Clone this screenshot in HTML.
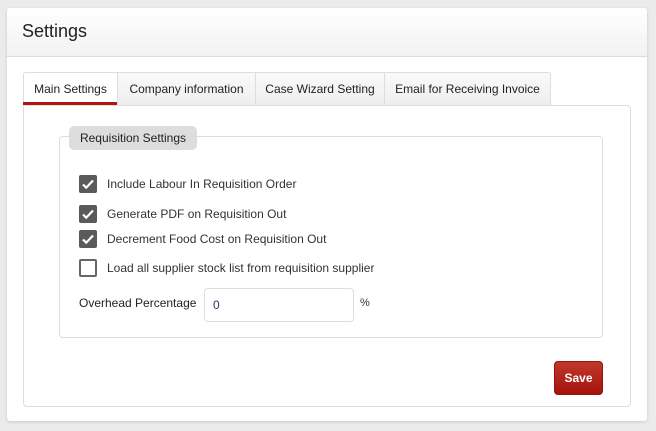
<!DOCTYPE html>
<html><head><style>
*{box-sizing:border-box;margin:0;padding:0}
body{width:656px;height:431px;background:#ebebeb;font-family:"Liberation Sans",Arial,sans-serif;position:relative;overflow:hidden;color:#222}
.card{position:absolute;left:7px;top:8px;width:640px;height:413px;background:#fff;border-radius:3px;box-shadow:0 1px 3px rgba(0,0,0,.15)}
.hdr{position:absolute;left:0;top:0;width:640px;height:49px;background:linear-gradient(#fff,#f2f2f2);border-bottom:1px solid #ddd;border-radius:3px 3px 0 0}
.hdr span{position:absolute;left:15px;top:13px;font-size:18px;color:#222}
.tab{position:absolute;top:72px;height:33px;border:1px solid #ddd;border-bottom:none;background:linear-gradient(#fafafa,#eee);font-size:12px;line-height:32px;text-align:center;color:#222}
.panel{position:absolute;left:23px;top:105px;width:608px;height:302px;border:1px solid #ddd;border-radius:0 4px 4px 4px;background:#fff}
.fs{position:absolute;left:59px;top:136px;width:544px;height:202px;border:1px solid #ddd;border-radius:4px}
.legend{position:absolute;left:69px;top:126px;width:128px;height:24px;background:#ddd;border-radius:5px;font-size:12px;line-height:24px;text-align:center;color:#222}
.cb{position:absolute;left:79px;width:18px;height:18px;border-radius:2px}
.cb.on{background:#5a5a5a}
.cb.off{border:2px solid #666;background:#fff}
.lbl{position:absolute;left:107px;font-size:12px;color:#333}
</style></head><body>
<div class="card"><div class="hdr"><span>Settings</span></div></div>
<div class="panel"></div>
<div class="tab" style="left:23px;width:95px;background:#fff;border-radius:3px 0 0 0">Main Settings<div style="position:absolute;left:-1px;right:0;bottom:0;height:3px;background:#b0160f"></div></div>
<div class="tab" style="left:117px;width:139px">Company information</div>
<div class="tab" style="left:255px;width:130px">Case Wizard Setting</div>
<div class="tab" style="left:384px;width:167px;border-radius:0 3px 0 0">Email for Receiving Invoice</div>
<div class="fs"></div>
<div class="legend">Requisition Settings</div>
<div class="cb on" style="top:175px"><svg width="18" height="18"><path d="M4 9.5l3.2 3.2L14 5.5" stroke="#fff" stroke-width="2.2" fill="none"/></svg></div>
<div class="lbl" style="top:177px">Include Labour In Requisition Order</div>
<div class="cb on" style="top:205px"><svg width="18" height="18"><path d="M4 9.5l3.2 3.2L14 5.5" stroke="#fff" stroke-width="2.2" fill="none"/></svg></div>
<div class="lbl" style="top:207px">Generate PDF on Requisition Out</div>
<div class="cb on" style="top:230px"><svg width="18" height="18"><path d="M4 9.5l3.2 3.2L14 5.5" stroke="#fff" stroke-width="2.2" fill="none"/></svg></div>
<div class="lbl" style="top:232px">Decrement Food Cost on Requisition Out</div>
<div class="cb off" style="top:259px"></div>
<div class="lbl" style="top:261px">Load all supplier stock list from requisition supplier</div>
<div class="lbl" style="left:79px;top:296px;color:#222">Overhead Percentage</div>
<div style="position:absolute;left:204px;top:288px;width:150px;height:34px;border:1px solid #ddd;border-radius:4px;font-size:12px;line-height:32px;padding-left:8px;color:#336">0</div>
<div class="lbl" style="left:360px;top:297px;font-size:11px">%</div>
<div style="position:absolute;left:554px;top:361px;width:49px;height:34px;border-radius:4px;background:linear-gradient(#c0392b,#a5120c);border:1px solid #9a100a;color:#fff;font-weight:bold;font-size:12px;line-height:32px;text-align:center">Save</div>
</body></html>
